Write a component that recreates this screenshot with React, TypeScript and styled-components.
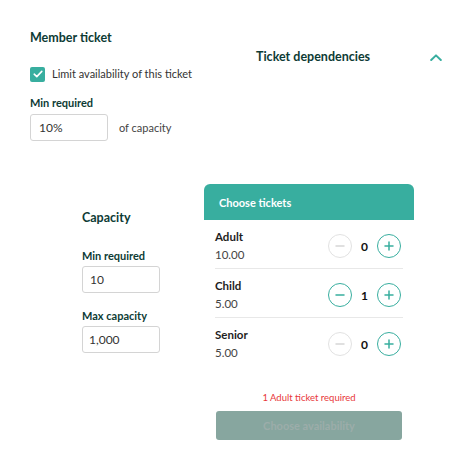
import React from "react";
import styled, { createGlobalStyle } from "styled-components";

const GlobalStyle = createGlobalStyle`
  body {
    margin: 0;
    background: #fff;
    font-family: Lato, "Open Sans", sans-serif;
    color: #333;
  }
`;

const teal = "#38ae9f";
const dark = "#0d3b35";

type Ticket = { name: string; price: string; count: number };

const tickets: Ticket[] = [
  { name: "Adult", price: "10.00", count: 0 },
  { name: "Child", price: "5.00", count: 1 },
  { name: "Senior", price: "5.00", count: 0 },
];

export default function App() {
  return (
    <Page>
      <GlobalStyle />
      <Top>
        <MemberCol>
          <Heading>Member ticket</Heading>
          <CheckRow>
            <Checkbox>
              <svg width="10" height="8" viewBox="0 0 10 8">
                <path d="M1.2 4.2 L3.8 6.6 L8.8 1.4" fill="none" stroke="#fff" strokeWidth="1.6" strokeLinecap="round" strokeLinejoin="round" />
              </svg>
            </Checkbox>
            <CheckText>Limit availability of this ticket</CheckText>
          </CheckRow>
          <FieldLabel $top={13}>Min required</FieldLabel>
          <InlineField>
            <Input $pad={8}>10%</Input>
            <Suffix>of capacity</Suffix>
          </InlineField>
        </MemberCol>
        <DepsHeader>
          <Heading>Ticket dependencies</Heading>
          <svg width="12" height="7" viewBox="0 0 12 7">
            <path d="M1.2 6 L6 1.4 L10.8 6" fill="none" stroke={teal} strokeWidth="2" strokeLinecap="round" strokeLinejoin="round" />
          </svg>
        </DepsHeader>
      </Top>

      <Bottom>
        <CapacityCol>
          <Heading>Capacity</Heading>
          <FieldLabel $top={21}>Min required</FieldLabel>
          <Input $pad={7}>10</Input>
          <FieldLabel $top={15}>Max capacity</FieldLabel>
          <Input $pad={6}>1,000</Input>
        </CapacityCol>

        <TicketsCol>
          <Card>
            <CardHeader>Choose tickets</CardHeader>
            {tickets.map((t) => (
              <TicketRow key={t.name}>
                <TicketInfo>
                  <TicketName>{t.name}</TicketName>
                  <TicketPrice>{t.price}</TicketPrice>
                </TicketInfo>
                <Stepper>
                  <RoundButton $active={t.count > 0}>
                    <svg width="10" height="10" viewBox="0 0 10 10">
                      <path d="M1 5 H9" stroke="currentColor" strokeWidth="1.5" strokeLinecap="round" />
                    </svg>
                  </RoundButton>
                  <Count>{t.count}</Count>
                  <RoundButton $active>
                    <svg width="10" height="10" viewBox="0 0 10 10">
                      <path d="M1 5 H9 M5 1 V9" stroke="currentColor" strokeWidth="1.5" strokeLinecap="round" />
                    </svg>
                  </RoundButton>
                </Stepper>
              </TicketRow>
            ))}
          </Card>
          <ErrorText>1 Adult ticket required</ErrorText>
          <SubmitButton disabled>Choose availability</SubmitButton>
        </TicketsCol>
      </Bottom>
    </Page>
  );
}

const Page = styled.div`
  padding: 29px 0 0 30px;
  width: 474px;
  box-sizing: border-box;
`;

const Top = styled.div`
  display: flex;
  align-items: flex-start;
`;

const MemberCol = styled.div`
  width: 226px;
  display: flex;
  flex-direction: column;
`;

const Heading = styled.div`
  font-size: 12.5px;
  line-height: 18px;
  font-weight: 700;
  color: ${dark};
`;

const CheckRow = styled.div`
  display: flex;
  align-items: center;
  gap: 7px;
  margin-top: 19px;
  height: 16px;
`;

const Checkbox = styled.span`
  width: 15px;
  height: 15px;
  border-radius: 2px;
  background: ${teal};
  display: flex;
  align-items: center;
  justify-content: center;
`;

const CheckText = styled.span`
  font-size: 11px;
  line-height: 16px;
  color: #333;
`;

const FieldLabel = styled.div<{ $top: number }>`
  margin-top: ${(p) => p.$top}px;
  margin-bottom: 2px;
  font-size: 11px;
  line-height: 16px;
  font-weight: 700;
  color: ${dark};
`;

const InlineField = styled.div`
  display: flex;
  align-items: center;
  gap: 11px;
  margin-top: 1px;
`;

const Input = styled.div<{ $pad: number }>`
  width: 78px;
  height: 27px;
  box-sizing: border-box;
  border: 1px solid #d4d4d4;
  border-radius: 3px;
  padding-left: ${(p) => p.$pad}px;
  display: flex;
  align-items: center;
  font-size: 12px;
  color: #333;
  background: #fff;
`;

const Suffix = styled.span`
  font-size: 11px;
  color: #444;
`;

const DepsHeader = styled.div`
  width: 186px;
  margin-top: 19px;
  display: flex;
  align-items: center;
  justify-content: space-between;
`;

const Bottom = styled.div`
  display: flex;
  align-items: flex-start;
  margin-top: 43px;
  padding-left: 52px;
`;

const CapacityCol = styled.div`
  width: 122px;
  padding-top: 25px;
  display: flex;
  flex-direction: column;
`;

const TicketsCol = styled.div`
  width: 210px;
  display: flex;
  flex-direction: column;
`;

const Card = styled.div`
  background: #fff;
  border-radius: 6px 6px 0 0;
`;

const CardHeader = styled.div`
  height: 36px;
  background: ${teal};
  border-radius: 6px 6px 0 0;
  padding-left: 15px;
  display: flex;
  align-items: center;
  color: #fff;
  font-size: 11px;
  font-weight: 700;
`;

const TicketRow = styled.div`
  margin: 0 11px;
  padding: 9px 0 5px;
  display: flex;
  align-items: center;
  justify-content: space-between;
  border-bottom: 1px solid #e8e8e8;

  &:last-child {
    border-bottom: 1px solid transparent;
  }
`;

const TicketInfo = styled.div`
  display: flex;
  flex-direction: column;
  gap: 2px;
`;

const TicketName = styled.div`
  font-size: 11.5px;
  line-height: 16px;
  font-weight: 700;
  color: #1e1e1e;
`;

const TicketPrice = styled.div`
  font-size: 11.5px;
  line-height: 16px;
  color: #444;
`;

const Stepper = styled.div`
  display: flex;
  align-items: center;
  margin-right: 2px;
`;

const RoundButton = styled.span<{ $active?: boolean }>`
  width: 24px;
  height: 24px;
  box-sizing: border-box;
  border-radius: 50%;
  border: 1.5px solid ${(p) => (p.$active ? teal : "#e2e2e2")};
  color: ${(p) => (p.$active ? teal : "#d6d6d6")};
  display: flex;
  align-items: center;
  justify-content: center;
`;

const Count = styled.span`
  width: 25px;
  text-align: center;
  font-size: 12px;
  font-weight: 700;
  color: #111;
`;

const ErrorText = styled.div`
  margin-top: 24px;
  text-align: center;
  font-size: 9.5px;
  line-height: 14px;
  color: #e8373a;
`;

const SubmitButton = styled.button`
  margin: 6px 12px 0;
  height: 29px;
  border: none;
  border-radius: 3px;
  background: #87a69f;
  color: #9cadaa;
  font-family: Lato, sans-serif;
  font-size: 11px;
  font-weight: 700;
`;
